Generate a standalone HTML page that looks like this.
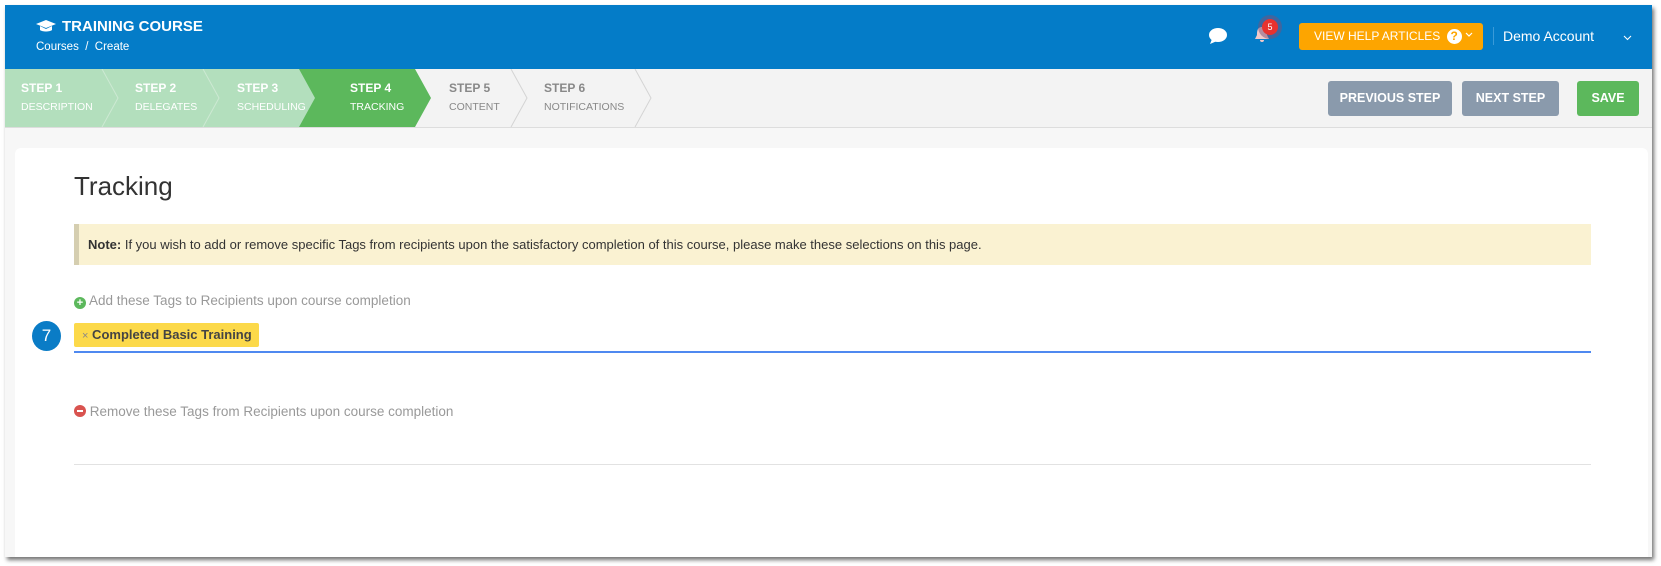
<!DOCTYPE html>
<html><head><meta charset="utf-8"><style>
*{box-sizing:border-box;margin:0;padding:0}
body{width:1661px;height:566px;background:#fff;font-family:"Liberation Sans",sans-serif;position:relative;overflow:hidden}
.frame{position:absolute;left:5px;top:5px;width:1647px;height:552px;background:#f7f7f7;box-shadow:2px 3px 4px rgba(0,0,0,.55);overflow:hidden}
.hdr{position:absolute;left:0;top:0;width:100%;height:64px;background:#047cc8;color:#fff}
.steps{position:absolute;left:0;top:64px;width:100%;height:59px;background:#f3f3f3;border-bottom:1px solid #ddd}
.step{position:absolute;top:0;height:58px;font-size:10.5px;line-height:1}
.step b{display:block;font-size:12px;margin-top:13px;margin-bottom:8px}
.btn{position:absolute;top:12px;height:35px;border-radius:3px;color:#fff;font-weight:bold;font-size:12.5px;text-align:center;line-height:35px;background:#8a9aac}
.card{position:absolute;left:10px;top:143px;width:1633px;height:420px;background:#fff;border-radius:6px}
.lbl{position:absolute;left:69px;font-size:13.5px;color:#999}
</style></head><body>
<div class="frame">
<div class="hdr">
 <svg style="position:absolute;left:31px;top:14px" width="20" height="14" viewBox="0 0 20 14"><path d="M10 1 L20 5 L10 9 L0 5Z" fill="#fff"/><path d="M4 7 V11 C6 13 14 13 16 11 V7 L10 10Z" fill="#fff"/></svg>
 <div style="position:absolute;left:57px;top:13px;font-size:15px;font-weight:bold">TRAINING COURSE</div>
 <div style="position:absolute;left:31px;top:36px;font-size:11.5px">Courses &nbsp;/&nbsp; Create</div>
 <svg style="position:absolute;left:1203px;top:22px" width="20" height="18" viewBox="0 0 20 18"><ellipse cx="10" cy="8" rx="9" ry="7" fill="#fff"/><path d="M4 12 L2 17 L9 14Z" fill="#fff"/></svg>
 <div style="position:absolute;left:1248px;top:20px;width:18px;height:20px"><svg width="18" height="20" viewBox="0 0 18 20"><path d="M9 2 C4 2 4 7 4 10 L2 14 H16 L14 10 C14 7 14 2 9 2Z M7 15 a2 2 0 0 0 4 0Z" fill="#f2c9c9"/></svg></div>
 <div style="position:absolute;left:1257px;top:14px;width:16px;height:16px;border-radius:50%;background:#e8322f;color:#fff;font-size:9px;text-align:center;line-height:16px;box-shadow:0 0 0 4px rgba(120,80,120,.5)">5</div>
 <div style="position:absolute;left:1294px;top:18px;width:184px;height:27px;background:#fda500;border-radius:3px;font-size:12px;line-height:27px;padding-left:15px">VIEW HELP ARTICLES <span style="display:inline-block;width:15px;height:15px;border-radius:50%;background:#fff;color:#fda500;font-weight:bold;text-align:center;line-height:15px;font-size:12px;margin-left:3px">?</span> <svg width="8" height="5" viewBox="0 0 8 5" style="vertical-align:3px"><path d="M1 1 L4 4 L7 1" fill="none" stroke="#fff" stroke-width="1.2"/></svg></div>
 <div style="position:absolute;left:1488px;top:22px;width:1px;height:18px;background:#3a9ad8"></div>
 <div style="position:absolute;left:1498px;top:23px;font-size:14px">Demo Account</div>
 <svg style="position:absolute;left:1618px;top:30px" width="9" height="6" viewBox="0 0 9 6"><path d="M1 1 L4.5 4.5 L8 1" fill="none" stroke="#fff" stroke-width="1.1"/></svg>
</div>
<div class="steps">
 <svg style="position:absolute;left:0;top:0" width="700" height="58">
  <polygon points="0,0 312,0 328,29 312,58 0,58" fill="#b3dfbd"/>
  <polygon points="294,0 410,0 426,29 410,58 294,58 310,29" fill="#5cb85c"/>
  <polyline points="97,0 113,29 97,58" fill="none" stroke="#cde9d3" stroke-width="1"/>
  <polyline points="198,0 214,29 198,58" fill="none" stroke="#cde9d3" stroke-width="1"/>
  <polyline points="506,0 522,29 506,58" fill="none" stroke="#d4d4d4" stroke-width="1"/>
  <polyline points="630,0 646,29 630,58" fill="none" stroke="#d4d4d4" stroke-width="1"/>
 </svg>
 <div class="step" style="left:16px;color:#fff"><b>STEP 1</b>DESCRIPTION</div>
 <div class="step" style="left:130px;color:#fff"><b>STEP 2</b>DELEGATES</div>
 <div class="step" style="left:232px;color:#fff"><b>STEP 3</b>SCHEDULING</div>
 <div class="step" style="left:345px;color:#fff"><b>STEP 4</b>TRACKING</div>
 <div class="step" style="left:444px;color:#888"><b>STEP 5</b>CONTENT</div>
 <div class="step" style="left:539px;color:#888"><b>STEP 6</b>NOTIFICATIONS</div>
 <div class="btn" style="left:1323px;width:124px">PREVIOUS STEP</div>
 <div class="btn" style="left:1457px;width:97px">NEXT STEP</div>
 <div class="btn" style="left:1572px;width:62px;background:#5cb85c">SAVE</div>
</div>
<div class="card">
 <div style="position:absolute;left:59px;top:23px;font-size:26px;color:#333">Tracking</div>
 <div style="position:absolute;left:59px;top:76px;width:1517px;height:41px;background:#faf2d2;border-left:5px solid #d5ceb0;font-size:13px;line-height:41px;padding-left:9px;color:#333"><b>Note:</b> If you wish to add or remove specific Tags from recipients upon the satisfactory completion of this course, please make these selections on this page.</div>
 <div class="lbl" style="top:145px;left:59px"><span style="display:inline-block;width:12px;height:12px;border-radius:50%;background:#5cb85c;color:#fff;font-size:11px;line-height:12px;text-align:center;font-weight:bold;vertical-align:-1px">+</span> Add these Tags to Recipients upon course completion</div>
 <div style="position:absolute;left:17px;top:173px;width:29px;height:30px;border-radius:50%;background:#0a7cc6;color:#fff;font-size:17px;text-align:center;line-height:30px">7</div>
 <div style="position:absolute;left:59px;top:175px;width:185px;height:24px;background:#fcd94a;border-radius:2px;font-size:13px;font-weight:bold;color:#444;line-height:24px;padding-left:8px"><span style="font-weight:normal;color:#888;font-size:11px">×</span> Completed Basic Training</div>
 <div style="position:absolute;left:59px;top:203px;width:1517px;height:2px;background:#4f89f0"></div>
 <div class="lbl" style="top:256px;left:59px"><span style="display:inline-block;width:12px;height:12px;border-radius:50%;background:#d9534f;vertical-align:-1px;position:relative"><span style="position:absolute;left:3px;top:5px;width:6px;height:2px;background:#fff"></span></span> Remove these Tags from Recipients upon course completion</div>
 <div style="position:absolute;left:59px;top:316px;width:1517px;height:1px;background:#e2e2e2"></div>
</div>
</div>
</body></html>
